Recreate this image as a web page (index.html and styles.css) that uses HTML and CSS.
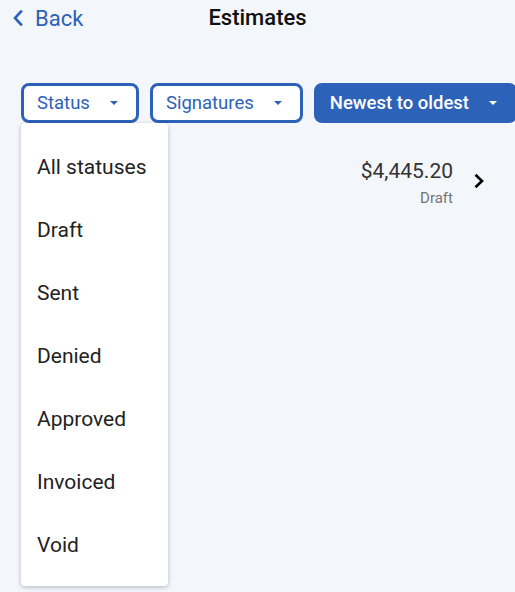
FILE: index.html
```html
<!DOCTYPE html>
<html lang="en">
<head>
<meta charset="utf-8">
<title>Estimates</title>
<link rel="stylesheet" href="styles.css">
</head>
<body>
<div class="page">
  <header class="topbar">
    <a class="back" href="#">
      <svg class="back-icon" width="10" height="16" viewBox="0 0 10 16"><path d="M8 1.5 L2 8 L8 14.5" fill="none" stroke="#2d62b9" stroke-width="2.6" stroke-linecap="square" stroke-linejoin="miter"/></svg>
      <span>Back</span>
    </a>
    <h1 class="title">Estimates</h1>
  </header>

  <div class="filters">
    <button class="filter outline status">Status<span class="caret"></span></button>
    <button class="filter outline signatures">Signatures<span class="caret"></span></button>
    <button class="filter solid sort">Newest to oldest<span class="caret"></span></button>
  </div>

  <div class="content">
    <div class="estimate">
      <div class="amounts">
        <div class="price">$4,445.20</div>
        <div class="state">Draft</div>
      </div>
      <svg class="chev" width="12" height="16" viewBox="0 0 12 16"><path d="M2.5 1.8 L9 8 L2.5 14.2" fill="none" stroke="#000" stroke-width="2.6"/></svg>
    </div>

    <ul class="menu">
      <li>All statuses</li>
      <li>Draft</li>
      <li>Sent</li>
      <li>Denied</li>
      <li>Approved</li>
      <li>Invoiced</li>
      <li>Void</li>
    </ul>
  </div>
</div>
</body>
</html>
```

FILE: styles.css
```css
* { box-sizing: border-box; }
html, body {
  margin: 0;
  padding: 0;
  background: #f3f6fb;
  font-family: Roboto, "Liberation Sans", sans-serif;
}
.page {
  width: 515px;
  height: 592px;
  overflow: hidden;
}
.topbar {
  position: relative;
  height: 36px;
  display: flex;
  align-items: center;
  justify-content: center;
}
.back {
  position: absolute;
  left: 13px;
  top: 0;
  height: 36px;
  display: flex;
  align-items: center;
  gap: 12px;
  color: #2d62b9;
  text-decoration: none;
  font-size: 22px;
}
.back-icon { display: block; }
.title {
  margin: 0;
  font-size: 22px;
  font-weight: 500;
  color: #111;
  line-height: 36px;
}
.filters {
  margin-top: 47px;
  padding-left: 21px;
  display: flex;
  gap: 11px;
}
.filter {
  flex-shrink: 0;
  white-space: nowrap;
  height: 40px;
  border-radius: 8px;
  font-family: Roboto, "Liberation Sans", sans-serif;
  font-size: 18.5px;
  display: flex;
  align-items: center;
  padding: 0 18px 0 13px;
  cursor: pointer;
}
.outline {
  background: #fff;
  border: 3px solid #2d62b9;
  color: #2d62b9;
}
.solid {
  background: #2d62b9;
  border: 3px solid #2d62b9;
  color: #fff;
  font-weight: 500;
  padding-right: 17px;
}
.caret {
  width: 0;
  height: 0;
  margin-left: 20px;
  border-left: 4.5px solid transparent;
  border-right: 4.5px solid transparent;
  border-top: 4.5px solid currentColor;
}
.content {
  position: relative;
}
.estimate {
  display: flex;
  justify-content: flex-end;
  align-items: flex-start;
  padding: 35px 30px 0 0;
  gap: 20px;
}
.amounts {
  text-align: right;
}
.price {
  font-size: 21px;
  line-height: 26px;
  color: #333;
}
.state {
  font-size: 15px;
  line-height: 28px;
  color: #757575;
}
.chev {
  margin-top: 15px;
  display: block;
}
.menu {
  position: absolute;
  left: 21px;
  top: 0;
  width: 147px;
  margin: 0;
  padding: 12px 0 10px;
  list-style: none;
  background: #fff;
  border-radius: 4px;
  box-shadow: 0 1px 4px rgba(0,0,0,0.18), 0 2px 6px rgba(0,0,0,0.08);
}
.menu li {
  height: 63px;
  display: flex;
  align-items: center;
  padding-left: 16px;
  font-size: 21px;
  color: #222;
}
```
